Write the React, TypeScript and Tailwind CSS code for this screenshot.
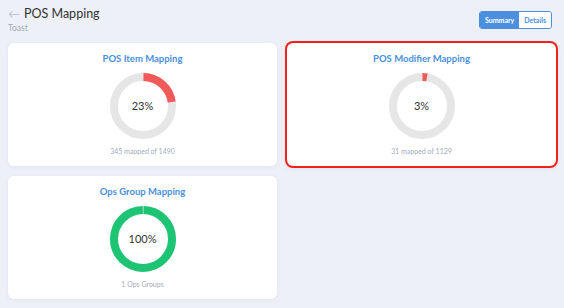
import React from 'react'

type Card = { title: string; pct: number; color: string; note: string; active?: boolean }

const cards: Card[] = [
  { title: 'POS Item Mapping', pct: 23, color: '#f25a5a', note: '345 mapped of 1490' },
  { title: 'POS Modifier Mapping', pct: 3, color: '#f25a5a', note: '31 mapped of 1129', active: true },
  { title: 'Ops Group Mapping', pct: 100, color: '#1dc474', note: '1 Ops Groups' },
]

function Donut({ pct, color }: { pct: number; color: string }) {
  const r = 29
  const c = 2 * Math.PI * r
  const gap = 1
  const fill = (pct / 100) * c
  return (
    <div className="relative w-[66px] h-[66px]">
      <svg width="66" height="66" viewBox="0 0 66 66" className="-rotate-90">
        <circle cx="33" cy="33" r={r} fill="none" stroke="#e6e6e6" strokeWidth="8" />
        <circle
          cx="33"
          cy="33"
          r={r}
          fill="none"
          stroke={color}
          strokeWidth="8"
          strokeDasharray={`${Math.max(fill - gap, 0)} ${c}`}
          strokeDashoffset={-gap / 2}
        />
      </svg>
      <div className="absolute inset-0 flex items-center justify-center text-[11px] text-[#333]">
        {pct}%
      </div>
    </div>
  )
}

function MappingCard({ card }: { card: Card }) {
  return (
    <div
      className={[
        'bg-white rounded-md flex flex-col items-center pt-[10px] pb-[8px] h-[123px]',
        card.active ? 'ring-2 ring-[#f0201a] shadow-[0_2px_6px_rgba(120,130,170,0.15)]' : 'shadow-[0_1px_4px_rgba(120,130,170,0.12)]',
      ].join(' ')}
    >
      <div className="text-[9.5px] font-bold text-[#4a8fe0] leading-[12px]">{card.title}</div>
      <div className="mt-[8px]">
        <Donut pct={card.pct} color={card.color} />
      </div>
      <div className="mt-[7px] text-[7px] text-[#a3abbb] leading-[10px]">{card.note}</div>
    </div>
  )
}

export default function App() {
  return (
    <div
      className="w-[564px] h-[308px] bg-[#eef0f8] overflow-hidden"
      style={{ fontFamily: 'Lato, "Noto Sans", sans-serif' }}
    >
      <div className="flex items-start justify-between px-2 pt-[5px]">
        <div>
          <div className="flex items-center">
            <span className="text-[#b8bcc8] text-[12px] w-[16px] leading-[16px]">←</span>
            <span className="text-[12.5px] text-[#333] leading-[17px]">POS Mapping</span>
          </div>
          <div className="text-[8.5px] text-[#a3a8b5] mt-[1px] leading-[10px]">Toast</div>
        </div>
        <div className="flex mt-[6px] mr-[4px] rounded-[3px] border border-[#4a8fe0] overflow-hidden h-[18px]">
          <div className="bg-[#4a8fe0] text-white text-[7px] font-bold px-[5px] flex items-center">Summary</div>
          <div className="bg-white text-[#4a8fe0] text-[7px] font-bold px-[5px] flex items-center">Details</div>
        </div>
      </div>
      <div className="grid grid-cols-2 gap-x-[10px] gap-y-[10px] px-2 mt-[10px]">
        {cards.map((c) => (
          <MappingCard key={c.title} card={c} />
        ))}
      </div>
    </div>
  )
}
